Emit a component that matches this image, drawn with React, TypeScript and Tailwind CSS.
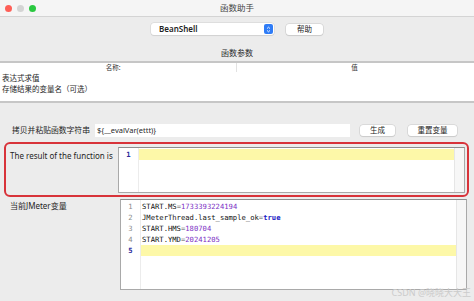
import React from "react";

const ui = { fontFamily: '"Noto Sans", "Noto Sans CJK SC", sans-serif' };
const mono = { fontFamily: '"DejaVu Sans Mono", "Liberation Mono", monospace' };

function Btn({ label, w }: { label: string; w: string }) {
  return (
    <div
      className={`${w} h-[11px] rounded-[3px] bg-white shadow-[0_0_0_0.5px_#c8c8c8,0_1px_1px_rgba(0,0,0,0.12)] flex items-center justify-center text-[7.5px] leading-none text-[#222]`}
    >
      {label}
    </div>
  );
}

function CodeArea({
  lines,
  current,
  h,
}: {
  lines: React.ReactNode[];
  current: number;
  h: string;
}) {
  return (
    <div className={`flex-1 ${h} bg-white border border-[#a9a9a9] border-t-[#8e8e8e] flex`}>
      <div className="w-[20px] border-r border-[#ececec] pt-[1px]">
        {lines.map((_, i) => (
          <div
            key={i}
            className={`h-[11px] leading-[11px] text-[7.2px] text-center ${
              i === current ? "text-[#2a2a9a] font-bold" : "text-[#8a8a8a]"
            }`}
            style={mono}
          >
            {i + 1}
          </div>
        ))}
      </div>
      <div className="flex-1 pt-[1px]">
        {lines.map((l, i) => (
          <div
            key={i}
            className={`h-[11px] leading-[11px] text-[7.2px] pl-[1px] whitespace-nowrap text-[#111] ${
              i === current ? "bg-[#fdf8a8]" : ""
            }`}
            style={mono}
          >
            {l}
          </div>
        ))}
      </div>
      <div className="w-[10px] bg-[#f7f7f7] border-l border-[#e6e6e6]" />
    </div>
  );
}

export default function App() {
  const num = "text-[#7b2fc4]";
  const eq = "text-[#555]";
  const vars: React.ReactNode[] = [
    <>
      START.MS<span className={eq}>=</span>
      <span className={num}>1733393224194</span>
    </>,
    <>
      JMeterThread.last_sample_ok<span className={eq}>=</span>
      <span className="text-[#1d1dc4] font-bold">true</span>
    </>,
    <>
      START.HMS<span className={eq}>=</span>
      <span className={num}>180704</span>
    </>,
    <>
      START.YMD<span className={eq}>=</span>
      <span className={num}>20241205</span>
    </>,
    <></>,
  ];

  return (
    <div
      className="w-[474px] h-[301px] overflow-hidden bg-[#ececec] relative text-[#1f1f1f]"
      style={ui}
    >
      {/* title bar */}
      <div className="h-[17px] bg-[#f5f5f5] border-b border-[#d4d4d4] flex items-center relative">
        <div className="flex gap-[5px] ml-[5px]">
          <div className="w-[7px] h-[7px] rounded-full bg-[#fe5f57]" />
          <div className="w-[7px] h-[7px] rounded-full bg-[#d4d4d4]" />
          <div className="w-[7px] h-[7px] rounded-full bg-[#2ac840]" />
        </div>
        <div className="absolute inset-0 flex items-center justify-center text-[8.5px] text-[#444] leading-none">
          函数助手
        </div>
      </div>

      {/* toolbar */}
      <div className="h-[18px] flex justify-center items-end gap-[12px]">
        <div className="w-[123px] h-[12px] rounded-[3px] bg-white shadow-[0_0_0_0.5px_#cfcfcf,0_1px_1px_rgba(0,0,0,0.1)] flex items-center justify-between pl-[8px] pr-[1px]">
          <span className="text-[8px] leading-none font-semibold text-[#222]">BeanShell</span>
          <div className="w-[9px] h-[10px] rounded-[2px] bg-[#2f7cf6] flex items-center justify-center">
            <svg width="5" height="7" viewBox="0 0 5 7">
              <path d="M1 2.6 L2.5 1.2 L4 2.6 M1 4.4 L2.5 5.8 L4 4.4" stroke="white" strokeWidth="0.9" fill="none" />
            </svg>
          </div>
        </div>
        <Btn label="帮助" w="w-[37px]" />
      </div>

      <div className="h-[26px] pt-[12px] text-center text-[8px] leading-[12px] text-[#2a2a2a]">
        函数参数
      </div>

      {/* parameter table */}
      <div className="bg-white border-t-2 border-b-2 border-[#c6c6c6] h-[42px]">
        <div className="flex h-[9px] text-[6.5px] leading-[9px] text-[#333]">
          <div className="w-[237px] text-center pr-[10px] border-r border-[#e2e2e2]">名称:</div>
          <div className="flex-1 text-center pr-[2px]">值</div>
        </div>
        <div className="pl-[2px] text-[7.5px] leading-[11px] pt-[1px]">
          <div>表达式求值</div>
          <div>存储结果的变量名（可选）</div>
        </div>
      </div>

      {/* function string row */}
      <div className="mt-[21px] h-[13px] flex items-center pl-[12px]">
        <div className="w-[83px] text-[7.8px] leading-none whitespace-nowrap">拷贝并粘贴函数字符串</div>
        <div className="w-[255px] h-[13px] bg-white flex items-center pl-[2px] text-[7.5px] leading-none">
          {"${__evalVar(ettt)}"}
        </div>
        <div className="ml-[10px]">
          <Btn label="生成" w="w-[35px]" />
        </div>
        <div className="ml-[13px]">
          <Btn label="重置变量" w="w-[49px]" />
        </div>
      </div>

      {/* result box */}
      <div className="mt-[5px] ml-[4px] w-[465px] h-[55px] border-2 border-[#d8333a] rounded-[6px] flex pt-[3px] pb-[2px] pr-[2px]">
        <div className="w-[112px] pl-[4px] pt-[3px] text-[8px] leading-[11px] whitespace-nowrap">
          The result of the function is
        </div>
        <CodeArea lines={[<></>]} current={0} h="h-[46px]" />
      </div>

      {/* jmeter vars */}
      <div className="mt-[2px] flex pr-[7px]">
        <div className="w-[120px] pl-[10px] pt-[1px] text-[8px] leading-[11px]">当前JMeter变量</div>
        <CodeArea lines={vars} current={4} h="h-[91px]" />
      </div>

      <div className="absolute right-[3px] bottom-[4px] text-[9px] leading-none text-[#cbcbcb]">
        CSDN @晓晓大大王
      </div>
    </div>
  );
}
